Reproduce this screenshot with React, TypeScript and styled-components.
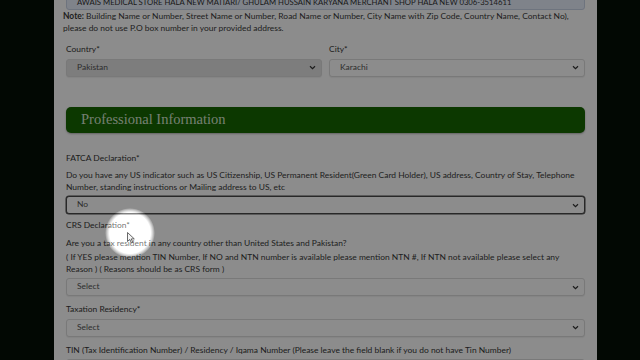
import React from 'react';
import styled, {createGlobalStyle} from 'styled-components';

const Global = createGlobalStyle`
  html, body {
    margin: 0;
    padding: 0;
    background: #050f07;
    overflow: hidden;
  }
  body {
    font-family: Lato, "Open Sans", sans-serif;
  }
`;

const Stage = styled.div`
  width: 640px;
  height: 360px;
  display: flex;
  justify-content: center;
  padding-left: 11px;
  box-sizing: border-box;
  overflow: hidden;
`;

const Page = styled.div`
  width: 543px;
  height: 360px;
  background: #fff;
  padding: 0 12px;
  box-sizing: border-box;
  color: #3a3a3a;
  font-size: 8.45px;
  line-height: 11.5px;
  overflow: hidden;
`;

const AddressBox = styled.div`
  margin-top: -5px;
  height: 15px;
  border: 1px solid #c9d3e6;
  border-radius: 3px;
  background: #e8effc;
  box-sizing: border-box;
  padding: 1px 10px 0;
  display: flex;
  align-items: center;
  font-size: 7.7px;
  text-transform: uppercase;
  color: #333;
  white-space: nowrap;
  overflow: hidden;
`;

const Note = styled.p`
  margin: 1px 0 0 -3px;
  white-space: nowrap;
  b { font-weight: 700; }
`;

const Row = styled.div`
  display: grid;
  grid-template-columns: 1fr 1fr;
  gap: 7px;
  margin-top: 10px;
`;

const Field = styled.div<{$top?: number}>`
  display: flex;
  flex-direction: column;
  gap: 3px;
  margin-top: ${p => p.$top ?? 0}px;
`;

const Label = styled.div`
  color: #363636;
  white-space: nowrap;
`;

const SelectBox = styled.div<{$disabled?: boolean; $focus?: boolean}>`
  height: 18px;
  box-sizing: border-box;
  border: 1px solid ${p => (p.$focus ? '#4a4a4a' : '#dcdcdc')};
  border-radius: 3px;
  background: ${p => (p.$disabled ? '#e4e4e4' : '#fff')};
  box-shadow: ${p => (p.$focus ? '0 0 0 0.5px #4a4a4a' : '0 1px 1px rgba(0,0,0,0.06)')};
  display: flex;
  align-items: center;
  justify-content: space-between;
  padding: 0 5px 0 10px;
  color: #555;
`;

const Banner = styled.div`
  margin-top: 30px;
  height: 26px;
  border-radius: 5px;
  background: #166600;
  display: flex;
  align-items: center;
  padding-left: 15px;
  font-family: "Liberation Serif", "DejaVu Serif", serif;
  font-size: 14.5px;
  color: #d6e6d0;
  box-shadow: 0 1px 2px rgba(0,0,0,0.3);
`;

const Text = styled.p<{$top?: number}>`
  margin: ${p => p.$top ?? 0}px 0 0 0;
  white-space: nowrap;
`;

const Overlay = styled.div`
  position: fixed;
  inset: 0;
  background: rgba(0, 0, 0, 0.45);
  pointer-events: none;
`;

const Spot = styled.div<{$blend: string; $color: string}>`
  position: fixed;
  left: 105px;
  top: 208px;
  width: 50px;
  height: 50px;
  border-radius: 50%;
  mix-blend-mode: ${p => p.$blend};
  background: radial-gradient(circle closest-side, ${p => p.$color} 0%, ${p => p.$color} 82%, transparent 100%);
  pointer-events: none;
`;

const Cursor = styled.svg`
  position: fixed;
  left: 127px;
  top: 232px;
`;

const Chevron = () => (
  <svg width="7" height="5" viewBox="0 0 7 5">
    <path d="M1 1.2 L3.5 3.6 L6 1.2" fill="none" stroke="#333" strokeWidth="1.2" />
  </svg>
);

const Select: React.FC<{value: string; disabled?: boolean; focus?: boolean}> = ({value, disabled, focus}) => (
  <SelectBox $disabled={disabled} $focus={focus}>
    <span>{value}</span>
    <Chevron />
  </SelectBox>
);

export default function App() {
  return (
    <>
      <Global />
      <Stage>
        <Page>
          <AddressBox>AWAIS MEDICAL STORE HALA NEW MATIARI/ GHULAM HUSSAIN KARYANA MERCHANT SHOP HALA NEW 0306-3514611</AddressBox>
          <Note>
            <b>Note:</b> Building Name or Number, Street Name or Number, Road Name or Number, City Name with Zip Code, Country Name, Contact No),
            <br />
            please do not use P.O box number in your provided address.
          </Note>
          <Row>
            <Field>
              <Label>Country*</Label>
              <Select value="Pakistan" disabled />
            </Field>
            <Field>
              <Label>City*</Label>
              <Select value="Karachi" />
            </Field>
          </Row>
          <Banner>Professional Information</Banner>
          <Field $top={20}>
            <Label>FATCA Declaration*</Label>
            <Text $top={3}>
              Do you have any US indicator such as US Citizenship, US Permanent Resident(Green Card Holder), US address, Country of Stay, Telephone
              <br />
              Number, standing instructions or Mailing address to US, etc
            </Text>
            <Select value="No" focus />
          </Field>
          <Field $top={6}>
            <Label>CRS Declaration*</Label>
            <Text $top={3}>Are you a tax resident in any country other than United States and Pakistan?</Text>
            <Text $top={0}>
              ( If YES please mention TIN Number, If NO and NTN number is available please mention NTN #, If NTN not available please select any
              <br />
              Reason ) ( Reasons should be as CRS form )
            </Text>
            <Select value="Select" />
          </Field>
          <Field $top={8}>
            <Label>Taxation Residency*</Label>
            <Select value="Select" />
          </Field>
          <Field $top={8}>
            <Label>TIN (Tax Identification Number) / Residency / Iqama Number (Please leave the field blank if you do not have Tin Number)</Label>
            <Select value="" />
          </Field>
        </Page>
      </Stage>
      <Overlay />
      <Spot $blend="color-dodge" $color="rgb(118,118,118)" />
      <Spot $blend="normal" $color="rgba(255,255,255,0.3)" />
      <Cursor width="8" height="12" viewBox="0 0 8 12">
        <path d="M0.5 0.5 L0.5 9.5 L2.8 7.4 L4.4 11 L5.8 10.4 L4.3 6.9 L7.3 6.9 Z" fill="#f4f4f4" stroke="#444" strokeWidth="0.8" />
      </Cursor>
    </>
  );
}
